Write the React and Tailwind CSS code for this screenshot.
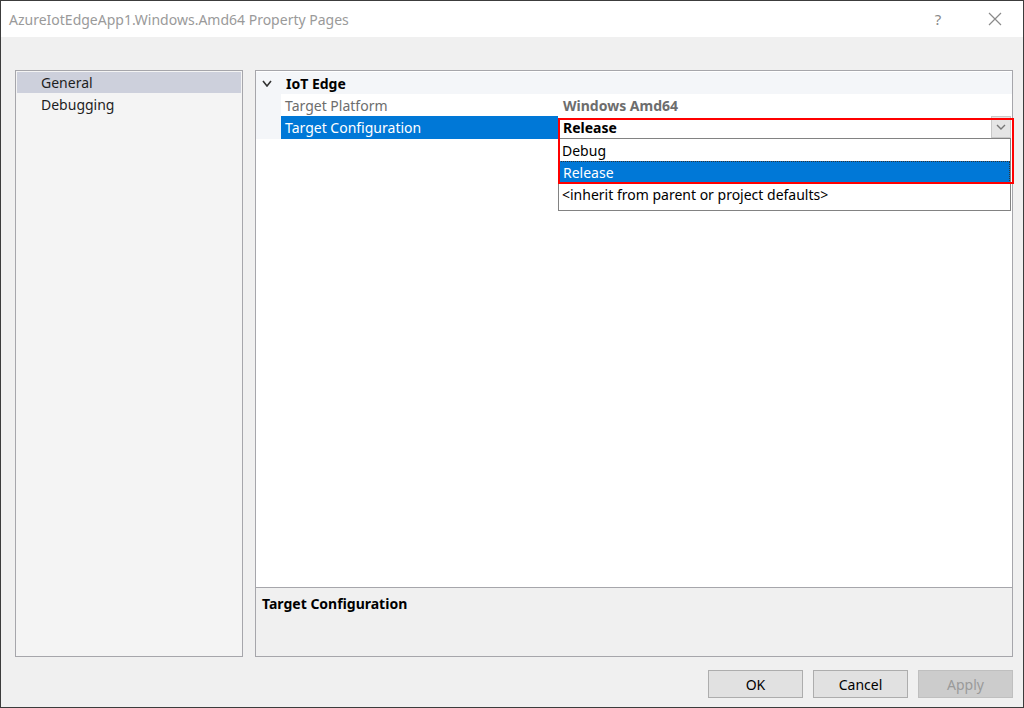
import React from "react";

const font = { fontFamily: '"Noto Sans", "Open Sans", sans-serif' };

function Chevron({ w = 10, h = 6, sw = 1.4 }) {
  return (
    <svg width={w} height={h} viewBox={`0 0 ${w} ${h}`}>
      <path d={`M1 1 L${w / 2} ${h - 1} L${w - 1} 1`} fill="none" stroke="currentColor" strokeWidth={sw} />
    </svg>
  );
}

export default function App() {
  return (
    <div
      className="w-[1024px] h-[708px] border border-[#3c3c3c] flex flex-col bg-[#f0f0f0] text-[14px] overflow-hidden"
      style={font}
    >
      {/* Title bar */}
      <div className="h-[36px] bg-white flex items-center shrink-0">
        <div className="pl-[8px] text-[14px] text-[#9a9a9a] flex-1">
          AzureIotEdgeApp1.Windows.Amd64 Property Pages
        </div>
        <div className="text-[15px] text-[#8a8a8a] w-[20px] text-center mr-[40px]">?</div>
        <svg width="14" height="14" viewBox="0 0 14 14" className="mr-[21px] text-[#8a8a8a]">
          <path d="M1 1 L13 13 M13 1 L1 13" stroke="currentColor" strokeWidth="1.2" fill="none" />
        </svg>
      </div>

      {/* Body */}
      <div className="flex-1 flex flex-col pt-[33px] pl-[14px] pr-[10px] pb-[9px]">
        <div className="flex-1 flex gap-[12px]">
          {/* Left nav */}
          <div className="w-[228px] border border-[#a6a6ab] bg-[#f4f4f4] pt-[1px] px-[1px]">
            <div className="h-[21px] bg-[#cdd0dc] pl-[24px] flex items-center text-[#1e1e1e]">General</div>
            <div className="h-[22px] pl-[24px] flex items-center text-[#1e1e1e]">Debugging</div>
          </div>

          {/* Right column */}
          <div className="flex-1 flex flex-col">
            <div className="relative h-[518px] border border-[#a6a6ab] bg-white pt-[1px]">
              {/* header row */}
              <div className="h-[22px] bg-[#f4f6f9] flex items-center">
                <div className="w-[30px] pl-[6px] flex text-[#333]">
                  <Chevron w={10} h={7} sw={1.6} />
                </div>
                <div className="font-bold text-black">IoT Edge</div>
              </div>
              {/* rows */}
              <div className="flex">
                <div className="w-[25px] bg-[#f4f6f9]" />
                <div className="flex-1">
                  <div className="h-[22px] flex">
                    <div className="w-[277px] flex items-center pl-[4px] text-[#6d6d6d]">Target Platform</div>
                    <div className="flex-1 flex items-center pl-[5px] font-bold text-[#6d6d6d]">Windows Amd64</div>
                  </div>
                  <div className="h-[23px] flex">
                    <div className="w-[277px] flex items-center pl-[4px] bg-[#0078d7] text-white">Target Configuration</div>
                    <div className="flex-1 relative">
                      <div className="h-[23px] flex items-center pl-[5px] font-bold text-black bg-white">
                        Release
                      </div>
                      <div className="absolute right-[1px] top-0 w-[20px] h-[22px] bg-[#e5e5e5] border border-[#c8c8c8] flex items-center justify-center text-[#777]">
                        <Chevron />
                      </div>
                      {/* Dropdown list */}
                      <div className="absolute left-0 right-[1px] top-[22px] border border-[#828282] bg-white z-10 pb-[5px]">
                        <div className="h-[22px] flex items-center pl-[3px] text-black">Debug</div>
                        <div className="h-[22px] flex items-center pl-[3px] bg-[#0078d7] text-white border border-dotted border-[#333]">Release</div>
                        <div className="h-[22px] flex items-center pl-[3px] text-black">&lt;inherit from parent or project defaults&gt;</div>
                      </div>
                      {/* Red annotation */}
                      <div className="absolute left-0 -right-[2px] top-[2px] h-[66px] border-2 border-[#ff0000] z-20 pointer-events-none" />
                    </div>
                  </div>
                </div>
              </div>
            </div>
            {/* Description */}
            <div className="flex-1 border border-[#a6a6ab] border-t-0 bg-[#f0f0f0] pl-[6px] pt-[5px]">
              <div className="font-bold text-black">Target Configuration</div>
            </div>
          </div>
        </div>

        {/* Buttons */}
        <div className="flex justify-end gap-[10px] pt-[13px]">
          <div className="w-[95px] h-[28px] bg-[#e1e1e1] border border-[#adadad] flex items-center justify-center text-black">OK</div>
          <div className="w-[95px] h-[28px] bg-[#e1e1e1] border border-[#adadad] flex items-center justify-center text-black">Cancel</div>
          <div className="w-[95px] h-[28px] bg-[#cccccc] border border-[#bfbfbf] flex items-center justify-center text-[#9a9a9a]">Apply</div>
        </div>
      </div>
    </div>
  );
}
